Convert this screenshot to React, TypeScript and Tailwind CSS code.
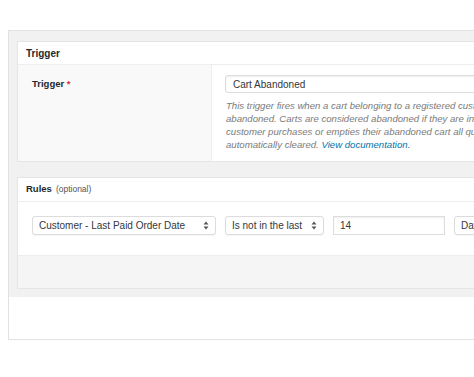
import React from 'react';

const font = { fontFamily: '"Liberation Sans", Arial, sans-serif' };

const Arrows: React.FC = () => (
  <svg width="6" height="9" viewBox="0 0 6 9" className="shrink-0">
    <path d="M3 0.5 L5.5 3.5 H0.5 Z" fill="#555" />
    <path d="M3 8.5 L5.5 5.5 H0.5 Z" fill="#555" />
  </svg>
);

const Select: React.FC<{ label: string; className?: string }> = ({ label, className }) => (
  <div
    className={`h-[19px] flex items-center justify-between pl-[6px] pr-[6px] bg-white border border-[#dcdcdc] rounded-[3px] shadow-[0_1px_1px_rgba(0,0,0,0.04)] text-[10px] text-[#32373c] whitespace-nowrap overflow-hidden ${className || ''}`}
  >
    <span>{label}</span>
    <Arrows />
  </div>
);

export default function App() {
  return (
    <div className="w-[474px] h-[377px] overflow-hidden bg-white" style={font}>
      <div className="pt-[30px] pl-[8px] w-[640px]">
        <div className="border border-[#e2e2e2]">
          <div className="bg-[#f1f1f1] pl-[8px] pt-[10px] pb-[8px]">
            {/* Trigger panel */}
            <div className="bg-white border border-[#e5e5e5]">
              <div className="h-[23px] flex items-center pl-[8px] border-b border-[#eeeeee] text-[10px] font-bold text-[#23282d]">
                Trigger
              </div>
              <div className="flex h-[96px]">
                <div className="w-[194px] shrink-0 bg-[#f9f9f9] border-r border-[#eeeeee] pl-[14px] pt-[12px] text-[9.5px] font-bold text-[#23282d]">
                  Trigger <span className="text-[#dc3232]">*</span>
                </div>
                <div className="pl-[13px] pt-[10px]">
                  <div className="w-[300px] h-[18px] flex items-center pl-[7px] border border-[#dddddd] rounded-[3px] shadow-[inset_0_1px_2px_rgba(0,0,0,0.07)] text-[10px] text-[#32373c]">
                    Cart Abandoned
                  </div>
                  <div className="mt-[6px] pl-[1px] text-[9.6px] leading-[13px] italic text-[#7a7a7a] whitespace-nowrap">
                    <div>This trigger fires when a cart belonging to a registered customer is considered</div>
                    <div>abandoned. Carts are considered abandoned if they are inactive for a set period. If the</div>
                    <div>customer purchases or empties their abandoned cart all queued workflows will be</div>
                    <div>
                      automatically cleared. <span className="text-[#0073aa]">View documentation.</span>
                    </div>
                  </div>
                </div>
              </div>
            </div>

            {/* Rules panel */}
            <div className="mt-[15px] bg-white border border-[#e5e5e5]">
              <div className="h-[24px] flex items-center pl-[8px] border-b border-[#eeeeee] text-[#23282d]">
                <span className="text-[9.5px] font-bold">Rules</span>
                <span className="ml-[4px] text-[8.5px] text-[#555555]">(optional)</span>
              </div>
              <div className="h-[53px] flex items-start pt-[14px] pl-[14px] gap-[9px]">
                <Select label="Customer - Last Paid Order Date" className="w-[184px]" />
                <Select label="Is not in the last" className="w-[99px]" />
                <div className="w-[112px] h-[19px] flex items-center pl-[6px] border border-[#dddddd] shadow-[inset_0_1px_2px_rgba(0,0,0,0.07)] text-[10px] text-[#32373c]">
                  14
                </div>
                <Select label="Days" className="w-[90px]" />
              </div>
              <div className="h-[33px] bg-[#f5f5f5] border-t border-[#eeeeee]" />
            </div>
          </div>
          <div className="h-[42px] bg-white" />
        </div>
      </div>
    </div>
  );
}
